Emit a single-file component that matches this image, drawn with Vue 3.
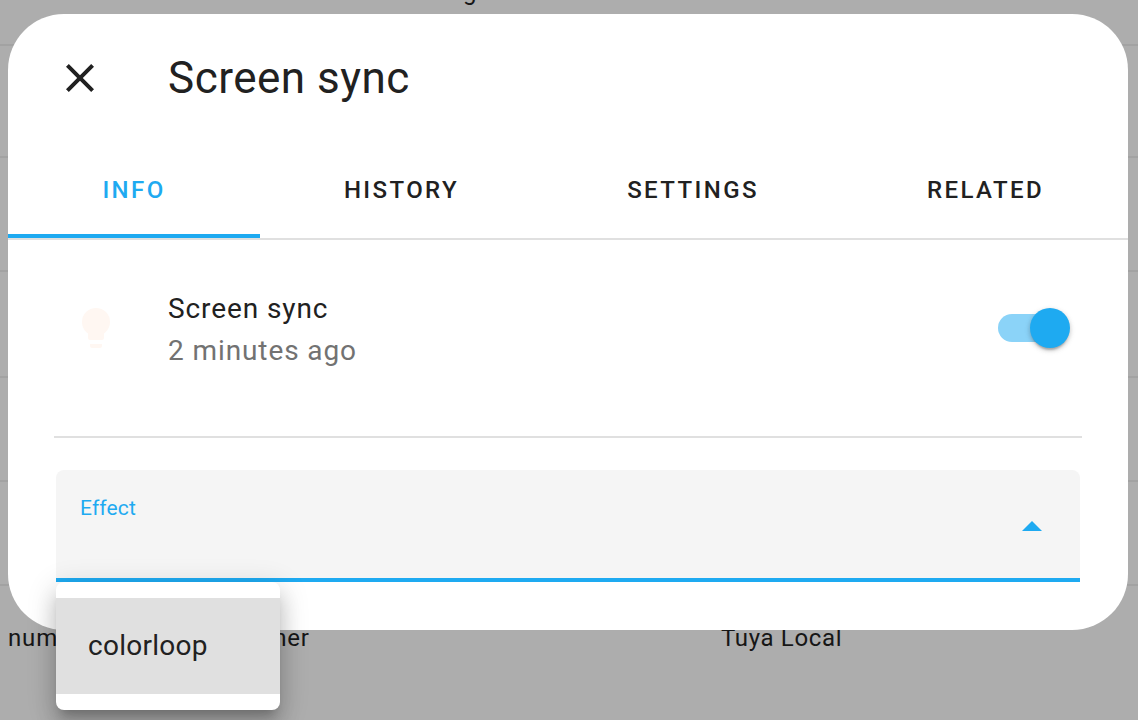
<script setup>
const rows = [
  { h: 106, a: 'g' },
  { h: 112 },
  { h: 114 },
  { h: 106 },
  { h: 104 },
  { h: 104 },
  { h: 104, a: '', name: 'number.air_purifier2_timer', src: 'Tuya Local' }
]
const tabs = ['INFO', 'HISTORY', 'SETTINGS', 'RELATED']
</script>

<template>
  <div class="page">
    <div class="list">
      <div v-for="(r, i) in rows" :key="i" class="row" :style="{ height: r.h + 'px' }">
        <span class="c1">{{ r.name }}</span>
        <span class="c2">{{ r.a }}</span>
        <span class="c3">{{ r.src }}</span>
      </div>
    </div>

    <div class="dialog">
      <header class="head">
        <svg class="close" viewBox="0 0 24 24"><path d="M19,6.41L17.59,5L12,10.59L6.41,5L5,6.41L10.59,12L5,17.59L6.41,19L12,13.41L17.59,19L19,17.59L13.41,12L19,6.41Z" /></svg>
        <h1 class="title">Screen sync</h1>
      </header>
      <nav class="tabs">
        <div v-for="(t, i) in tabs" :key="t" class="tab" :class="{ on: i === 0 }">{{ t }}</div>
      </nav>
      <div class="body">
        <div class="entity">
          <svg class="bulb" viewBox="0 0 24 24"><path d="M12,2A7,7 0 0,0 5,9C5,11.38 6.19,13.47 8,14.74V17A1,1 0 0,0 9,18H15A1,1 0 0,0 16,17V14.74C17.81,13.47 19,11.38 19,9A7,7 0 0,0 12,2M9,21A1,1 0 0,0 10,22H14A1,1 0 0,0 15,21V20H9V21Z" /></svg>
          <div class="info">
            <div class="name">Screen sync</div>
            <div class="time">2 minutes ago</div>
          </div>
          <div class="switch"><span class="track"></span><span class="thumb"></span></div>
        </div>
        <hr class="rule" />
        <div class="field">
          <span class="label">Effect</span>
          <span class="arrow"></span>
        </div>
      </div>
    </div>

    <div class="menu">
      <div class="item">colorloop</div>
    </div>
  </div>
</template>

<style scoped>
.page {
  position: relative;
  width: 1138px;
  height: 720px;
  overflow: hidden;
  background: #adadad;
  font-family: Roboto, sans-serif;
  color: #212121;
}
.list { margin-top: -60px; }
.row {
  display: grid;
  grid-template-columns: 455px 258px 1fr;
  align-items: center;
  padding-left: 8px;
  box-sizing: border-box;
  border-bottom: 2px solid #a2a2a2;
  font-size: 24px;
  letter-spacing: 0.65px;
  color: #161616;
}
.row:last-child { border-bottom: 0; }
.c1 { letter-spacing: 0.83px; white-space: nowrap; }
.dialog {
  position: absolute;
  left: 8px;
  top: 14px;
  width: 1120px;
  height: 616px;
  background: #fff;
  border-radius: 56px;
  overflow: hidden;
}
.head {
  display: flex;
  align-items: center;
  height: 128px;
  padding-left: 48px;
}
.close { width: 48px; height: 48px; fill: #212121; }
.title {
  margin: 0 0 0 64px;
  font-size: 44px;
  font-weight: 400;
  letter-spacing: 0.5px;
}
.tabs {
  display: grid;
  grid-template-columns: 252px 283px 300px 285px;
  height: 98px;
  box-sizing: border-box;
  border-bottom: 2px solid #e0e0e0;
}
.tab {
  display: flex;
  align-items: center;
  justify-content: center;
  height: 96px;
  box-sizing: border-box;
  font-size: 24px;
  font-weight: 500;
  letter-spacing: 2.4px;
}
.tab.on {
  padding-top: 4px;
  color: #1eaaf1;
  border-bottom: 4px solid #1eaaf1;
}
.body { padding: 52px 46px 0; }
.entity {
  display: flex;
  align-items: center;
  height: 72px;
  padding: 0 12px 0 18px;
}
.bulb { width: 48px; height: 48px; fill: #fff7f2; }
.info { margin-left: 48px; flex: 1; padding-top: 6px; }
.name { font-size: 28px; line-height: 40px; letter-spacing: 0.9px; }
.time { font-size: 28px; line-height: 44px; letter-spacing: 0.9px; color: #727272; }
.switch { position: relative; width: 72px; height: 40px; }
.track {
  position: absolute;
  left: 0;
  top: 6px;
  width: 68px;
  height: 28px;
  border-radius: 14px;
  background: #8bd3f8;
}
.thumb {
  position: absolute;
  right: 0;
  top: 0;
  width: 40px;
  height: 40px;
  border-radius: 50%;
  background: #1eaaf1;
  box-shadow: 0 4px 2px -2px rgba(0,0,0,.2), 0 2px 4px 0 rgba(0,0,0,.14), 0 2px 6px 0 rgba(0,0,0,.12);
}
.rule {
  margin: 72px 0 0;
  height: 2px;
  border: 0;
  background: #e0e0e0;
}
.field {
  position: relative;
  margin: 32px 2px 0;
  height: 112px;
  box-sizing: border-box;
  padding: 26px 24px 0;
  background: #f5f5f5;
  border-radius: 8px 8px 0 0;
  border-bottom: 4px solid #1eaaf1;
}
.label {
  display: block;
  font-size: 21px;
  line-height: 24px;
  letter-spacing: 0.15px;
  color: #1eaaf1;
}
.arrow {
  position: absolute;
  left: 966px;
  top: 51px;
  width: 0;
  height: 0;
  border-left: 10px solid transparent;
  border-right: 10px solid transparent;
  border-bottom: 10px solid #1eaaf1;
}
.menu {
  position: absolute;
  left: 56px;
  top: 582px;
  width: 224px;
  padding: 16px 0;
  background: #fff;
  border-radius: 8px;
  box-shadow: 0 10px 10px -6px rgba(0,0,0,.2), 0 16px 20px 2px rgba(0,0,0,.14), 0 6px 28px 4px rgba(0,0,0,.12);
}
.item {
  display: flex;
  align-items: center;
  height: 96px;
  padding: 0 0 2px 32px;
  box-sizing: border-box;
  background: #e0e0e0;
  font-size: 28px;
  letter-spacing: 0.25px;
}
</style>
